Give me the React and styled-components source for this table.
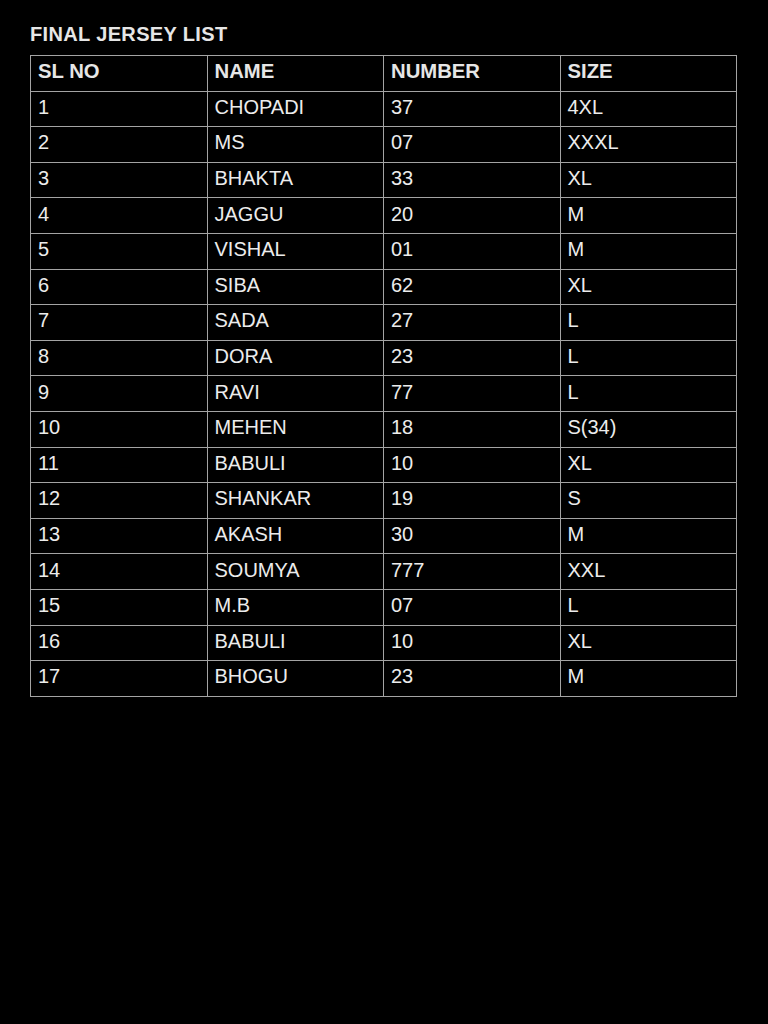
import React from "react";
import styled, { createGlobalStyle } from "styled-components";

const Global = createGlobalStyle`
  html, body { margin: 0; padding: 0; background: #000; }
  body { font-family: "Liberation Sans", Arial, sans-serif; color: #ececec; }
`;

const Page = styled.div`
  padding: 22px 31px 0 30px;
  min-height: 1024px;
  box-sizing: border-box;
  background: #000;
`;

const Title = styled.h1`
  margin: 0 0 8px 0;
  font-size: 20px;
  font-weight: 700;
  line-height: 25px;
  color: #e6e6e6;
  letter-spacing: 0.35px;
`;

const Table = styled.table`
  width: 707px;
  border-collapse: collapse;
  table-layout: fixed;
`;

const Row = styled.tr`
  height: 35.6px;
`;

const Cell = styled.td`
  border: 1.5px solid #a4a4a4;
  padding: 0 7px 4px 7px;
  font-size: ${(p) => (p.$head ? "20.3px" : "20px")};
  font-weight: ${(p) => (p.$head ? 700 : 400)};
  color: ${(p) => (p.$head ? "#e6e6e6" : "#ececec")};
  vertical-align: middle;
  white-space: nowrap;
  line-height: 24px;
`;

const rows = [
  ["1", "CHOPADI", "37", "4XL"],
  ["2", "MS", "07", "XXXL"],
  ["3", "BHAKTA", "33", "XL"],
  ["4", "JAGGU", "20", "M"],
  ["5", "VISHAL", "01", "M"],
  ["6", "SIBA", "62", "XL"],
  ["7", "SADA", "27", "L"],
  ["8", "DORA", "23", "L"],
  ["9", "RAVI", "77", "L"],
  ["10", "MEHEN", "18", "S(34)"],
  ["11", "BABULI", "10", "XL"],
  ["12", "SHANKAR", "19", "S"],
  ["13", "AKASH", "30", "M"],
  ["14", "SOUMYA", "777", "XXL"],
  ["15", "M.B", "07", "L"],
  ["16", "BABULI", "10", "XL"],
  ["17", "BHOGU", "23", "M"],
];

export default function App() {
  return (
    <Page>
      <Global />
      <Title>FINAL JERSEY LIST</Title>
      <Table>
        <tbody>
          <Row>
            {["SL NO", "NAME", "NUMBER", "SIZE"].map((h) => (
              <Cell key={h} $head>
                {h}
              </Cell>
            ))}
          </Row>
          {rows.map((r, i) => (
            <Row key={i}>
              {r.map((c, j) => (
                <Cell key={j}>{c}</Cell>
              ))}
            </Row>
          ))}
        </tbody>
      </Table>
    </Page>
  );
}
